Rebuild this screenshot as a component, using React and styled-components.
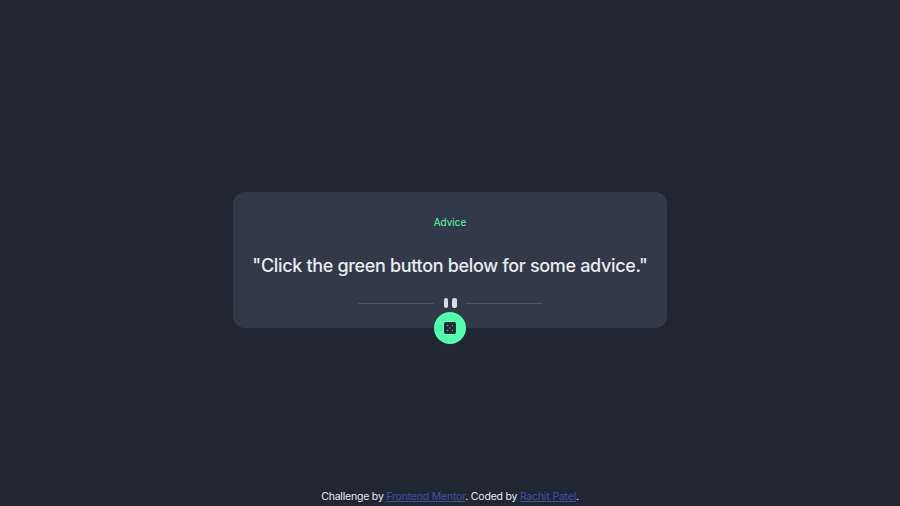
import React from "react";
import styled, { createGlobalStyle } from "styled-components";

const Global = createGlobalStyle`
  html, body { margin: 0; padding: 0; background: #202733; }
  body { font-family: Inter, "Noto Sans", sans-serif; }
`;
const Page = styled.div`
  width: 900px; height: 506px; display: flex; flex-direction: column; overflow: hidden;
`;
const Main = styled.main`
  flex: 1; display: flex; align-items: center; justify-content: center; padding-top: 34px;
`;
const Card = styled.section`
  position: relative; width: 434px; height: 136px; box-sizing: border-box; background: #323a49;
  border-radius: 12px; display: flex; flex-direction: column; align-items: center; padding-top: 23px;
`;
const Label = styled.p`
  margin: 0; font-size: 10px; line-height: 14px; color: #53ffaa; font-weight: 400;
`;
const Quote = styled.blockquote`
  margin: 23px 0 0; font-size: 18px; letter-spacing: -0.33px; line-height: 28px; font-weight: 500; color: #e8edf0; white-space: nowrap;
`;
const Divider = styled.div`
  display: flex; align-items: center; gap: 9.5px; margin-top: 17px; height: 12px;
`;
const Line = styled.span`
  width: 76px; height: 1px; background: #4a5565;
`;
const Pause = styled.span`
  display: flex; gap: 4px; padding-left: 0.5px;
`;
const Bar = styled.span`
  width: 4.5px; height: 10px; border-radius: 2px; background: #d8dde2;
`;
const Dice = styled.button`
  position: absolute; left: 201px; bottom: -16px; width: 32px; height: 32px; padding: 0; border: 0;
  border-radius: 50%; background: #53ffaa; display: flex; align-items: center; justify-content: center;
`;
const Footer = styled.footer`
  box-sizing: border-box; height: 20px; padding-top: 1px; font-size: 10.5px; letter-spacing: -0.2px; line-height: 20px; text-align: center; color: #e6eaee;
`;
const Link = styled.a`
  color: #3e52a3;
`;

export default function App() {
  return (
    <Page>
      <Global />
      <Main>
        <Card>
          <Label>Advice</Label>
          <Quote>"Click the green button below for some advice."</Quote>
          <Divider>
            <Line />
            <Pause><Bar /><Bar /></Pause>
            <Line />
          </Divider>
          <Dice aria-label="Get advice">
            <svg width="12" height="12" viewBox="0 0 12 12">
              <rect width="12" height="12" rx="2" fill="#202733" />
              <g fill="#48dc96">
                <rect x="3" y="3" width="1.2" height="1.2" />
                <rect x="7.8" y="3" width="1.2" height="1.2" />
                <rect x="5.4" y="5.4" width="1.2" height="1.2" />
                <rect x="3" y="7.8" width="1.2" height="1.2" />
                <rect x="7.8" y="7.8" width="1.2" height="1.2" />
              </g>
            </svg>
          </Dice>
        </Card>
      </Main>
      <Footer>
        Challenge by <Link href="#">Frontend Mentor</Link>. Coded by <Link href="#">Rachit Patel</Link>.
      </Footer>
    </Page>
  );
}
